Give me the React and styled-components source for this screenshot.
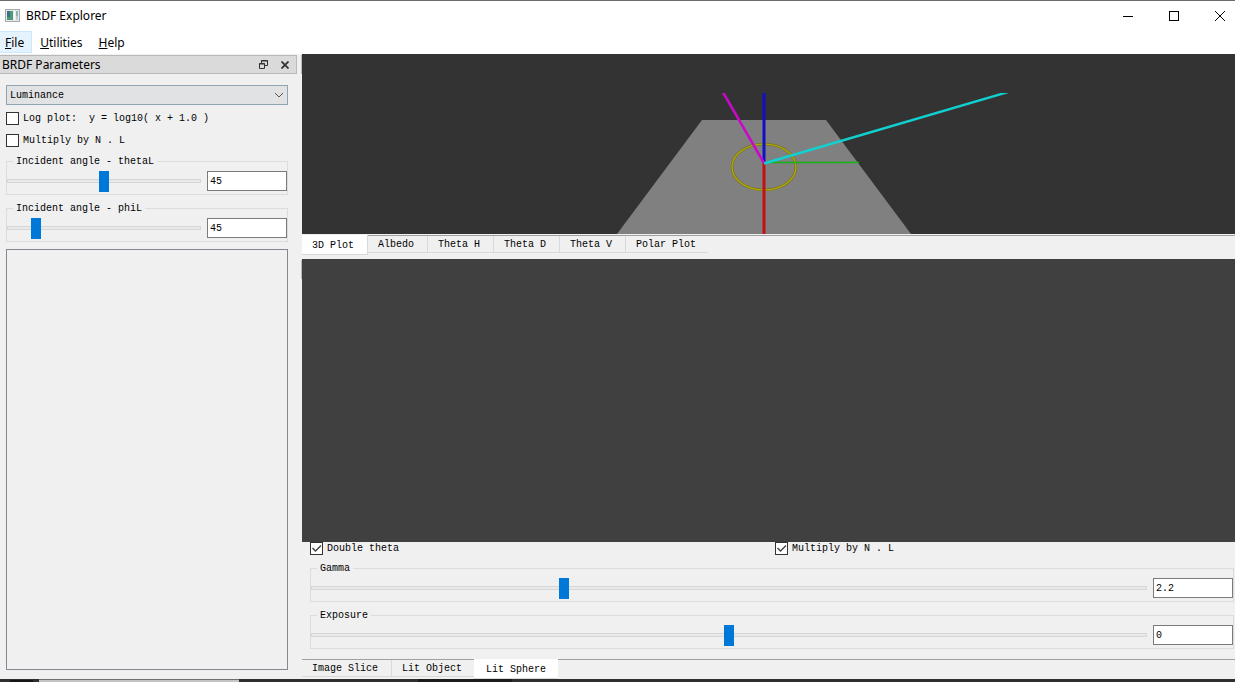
import React from 'react'
import styled, { createGlobalStyle, css } from 'styled-components'

const GlobalStyle = createGlobalStyle`
    * {
        box-sizing: border-box;
    }

    body {
        margin: 0;
        background-color: #f0f0f0;
        color: #000000;
        font-family: "Liberation Mono", monospace;
        font-size: 10px;
        line-height: 12px;
    }

    input, select, button {
        font: inherit;
        color: inherit;
        margin: 0;
    }
`

const Window = styled.div`
    display: flex;
    flex-direction: column;
    height: 100vh;
    overflow: hidden;
    border-top: 1px solid #6b6b6b;
`

const TitleBar = styled.header`
    display: flex;
    align-items: center;
    height: 29px;
    padding-left: 5px;
    background-color: #ffffff;
    font-family: "Noto Sans", sans-serif;
    font-size: 12px;
`

const Title = styled.h1`
    flex: 1;
    margin: 0 0 0 6px;
    font-size: 12px;
    font-weight: 400;
    line-height: 16px;
`

const WindowButtons = styled.div`
    display: flex;
    gap: 16px;
`

const IconButton = styled.button`
    display: flex;
    align-items: center;
    justify-content: center;
    width: ${(props) => props.$width}px;
    height: 18px;
    padding: 0;
    border: none;
    background: none;
`

const MenuBar = styled.nav`
    display: flex;
    height: 24px;
    padding: 1px 0;
    background-color: #ffffff;
    font-family: "Noto Sans", sans-serif;
    font-size: 12px;
`

const MenuItem = styled.button`
    padding: 1px 7px 0;
    border: 1px solid transparent;
    background: none;

    &:first-child {
        padding-left: 5px;
        border-left: none;
    }

    ${(props) => props.$active && css`
        border-color: #cce8ff;
        background-color: #e5f3ff;
    `}
`

const Main = styled.main`
    display: flex;
    flex: 1;
    min-height: 0;
`

const Dock = styled.aside`
    display: flex;
    flex-direction: column;
    width: 297px;
    padding-top: 1px;
`

const DockTitle = styled.div`
    display: flex;
    align-items: center;
    height: 19px;
    padding: 0 1px 0 2px;
    border: 1px solid #b9b9b9;
    border-left: none;
    background-color: #dadada;
    font-family: "Noto Sans", sans-serif;
`

const DockName = styled.h2`
    flex: 1;
    margin: 0;
    font-size: 12px;
    font-weight: 400;
    line-height: 16px;
`

const DockBody = styled.div`
    display: flex;
    flex: 1;
    flex-direction: column;
    gap: 7px;
    padding: 11px 9px 9px 6px;
`

const Combo = styled.div`
    display: grid;
    align-items: center;
    height: 20px;
    border: 1px solid #90a4b2;
    background-color: #e0e2e4;

    > * {
        grid-area: 1 / 1;
    }

    svg {
        justify-self: end;
        margin-right: 3px;
        pointer-events: none;
    }
`

const ComboSelect = styled.select`
    width: 100%;
    height: 18px;
    padding: 1px 3px 0;
    border: none;
    outline: none;
    background: none;
    appearance: none;
`

const DockOptions = styled.div`
    display: grid;
    grid-auto-rows: 14px;
    align-items: start;
    gap: 8px;
`

const CheckLabel = styled.label`
    display: flex;
    align-items: center;
    gap: 4px;
    white-space: pre;
`

const CheckMark = styled.span`
    display: grid;

    > * {
        grid-area: 1 / 1;
    }

    svg {
        display: none;
        pointer-events: none;
    }

    input:checked + svg {
        display: block;
    }
`

const CheckInput = styled.input`
    width: 13px;
    height: 13px;
    border: 1px solid #333333;
    background-color: #ffffff;
    appearance: none;
`

const Group = styled.fieldset`
    display: flex;
    align-items: center;
    gap: 6px;
    min-width: 0;
    margin: 0;
    padding: 3px 0;
    border: 1px solid #dcdcdc;
`

const GroupName = styled.legend`
    height: 12px;
    margin-left: 6px;
    padding: 0 3px;
    line-height: 14px;
`

const Slider = styled.input`
    flex: 1;
    min-width: 0;
    height: 21px;
    background: none;
    appearance: none;

    &::-webkit-slider-runnable-track {
        height: 4px;
        border: 1px solid #d6d6d6;
        background-color: #e7eaea;
    }

    &::-webkit-slider-thumb {
        width: 10px;
        height: 21px;
        margin-top: -9px;
        border: none;
        border-radius: 0;
        background-color: #0078d7;
        appearance: none;
    }
`

const ValueInput = styled.input`
    width: 80px;
    height: 20px;
    padding: 1px 2px 0;
    border: 1px solid #7a7a7a;
    border-radius: 0;
    outline: none;
    background-color: #ffffff;
`

const ParamList = styled.div`
    flex: 1;
    border: 1px solid #828790;
`

const Gutter = styled.div`
    display: flex;
    flex-direction: column;
    align-items: flex-end;
    gap: 186px;
    width: 5px;
    padding-top: 1px;
`

const GutterEdge = styled.span`
    width: 1px;
    height: 19px;
    background-color: #b9b9b9;
`

const Views = styled.section`
    display: flex;
    flex: 1;
    flex-direction: column;
    min-width: 0;
`

const Plot = styled.svg`
    display: block;
    flex: none;
    width: 100%;
    height: 180px;
    margin-bottom: 1px;
    background-color: #333333;
`

const TabBar = styled.div`
    display: flex;
    flex: none;
    align-items: flex-start;
    height: ${(props) => props.$height}px;
    border-top: 1px solid #a0a0a0;
`

const Tab = styled.button`
    height: 17px;
    padding: 2px 13px 0 10px;
    border: solid #d9d9d9;
    border-width: 0 1px 1px 0;
    background-color: #f0f0f0;

    &:last-child {
        padding-right: 12px;
        border-right: none;
    }

    ${(props) => props.$active && css`
        height: 20px;
        margin-top: -1px;
        background-color: #ffffff;

        &:not(:first-child) {
            margin-left: -2px;
            padding-left: 12px;
        }
    `}
`

const SphereView = styled.div`
    flex: 1;
    min-height: 0;
    background-color: #404040;
`

const Controls = styled.div`
    display: flex;
    flex-direction: column;
    gap: 7px;
    padding: 0 1px 10px 8px;
`

const ControlOptions = styled.div`
    display: grid;
    grid-template-columns: 1fr 1fr;
    gap: 6px;
`

const Taskbar = styled.footer`
    display: flex;
    height: 3px;
    background-color: #2f2f2f;
`

const TaskbarStart = styled.div`
    width: 23px;
    margin: 1px 6px 0 10px;
    background-color: #151515;
`

const TaskbarSearch = styled.div`
    width: 200px;
    border-top: 1px solid #6f6f6f;
    background-color: #c4c4c4;
`

const TaskbarWindow = styled.div`
    width: 94px;
    margin-left: 179px;
    background-color: #1b1b1b;
`

const plotTabs = ['3D Plot', 'Albedo', 'Theta H', 'Theta D', 'Theta V', 'Polar Plot']
const sphereTabs = ['Image Slice', 'Lit Object', 'Lit Sphere']

function Check({ label, checked }) {
    return (
        <CheckLabel>
            <CheckMark>
                <CheckInput type="checkbox" defaultChecked={checked} />
                <svg width="13" height="13" viewBox="0 0 13 13">
                    <path d="M2.5 6L5.5 9L11 3.5" fill="none" stroke="#404040" strokeWidth="1.4" />
                </svg>
            </CheckMark>
            {label}
        </CheckLabel>
    )
}

function SliderGroup({ name, max, position, value }) {
    return (
        <Group>
            <GroupName>{name}</GroupName>
            <Slider type="range" min="0" max={max} defaultValue={position} aria-label={name} />
            <ValueInput type="text" defaultValue={value} aria-label={name + ' value'} />
        </Group>
    )
}

function Tabs({ names, active, height }) {
    return (
        <TabBar role="tablist" $height={height}>
            {names.map((name) => (
                <Tab key={name} role="tab" aria-selected={name === active} $active={name === active}>
                    {name}
                </Tab>
            ))}
        </TabBar>
    )
}

function AxesPlot() {
    return (
        <Plot>
            <defs>
                <clipPath id="far">
                    <rect x="0" y="39" width="2000" height="141" />
                </clipPath>
            </defs>
            <polygon points="402,66 524,66 609,180 315,180 400,66" fill="#808080" />
            <g fill="none" clipPath="url(#far)">
                <ellipse cx="462" cy="113" rx="32" ry="23" stroke="#77741f" strokeWidth="2.6" />
                <ellipse cx="462" cy="113" rx="32" ry="23" stroke="#b5ac00" strokeWidth="1.2" />
                <path d="M462 108.5H557" stroke="#12b512" strokeWidth="1.6" />
                <path d="M462 109V180" stroke="#c41010" strokeWidth="3" />
                <path d="M462 39V109" stroke="#1010c4" strokeWidth="3" />
                <path d="M462 109L418.5 34" stroke="#c80ac8" strokeWidth="2.6" />
                <path d="M462 109.5L718 34.5" stroke="#10d0d0" strokeWidth="2.4" />
            </g>
        </Plot>
    )
}

function App() {
    return (
        <>
            <GlobalStyle />

            <Window>
                <TitleBar>
                    <svg width="15" height="13" viewBox="0 0 15 13">
                        <rect x="0.5" y="0.5" width="14" height="12" fill="#e6e9ea" stroke="#a4aaae" />
                        <rect x="2" y="2" width="6" height="9" fill="#4d9a78" />
                        <rect x="2" y="2" width="3" height="6" fill="#3f6f8c" />
                        <rect x="9" y="2" width="1" height="9" fill="#ffffff" />
                        <rect x="11" y="2" width="2" height="5" fill="#8fb3a8" />
                        <rect x="11" y="7" width="2" height="4" fill="#c3c9cc" />
                    </svg>
                    <Title>BRDF Explorer</Title>
                    <WindowButtons>
                        <IconButton $width={30} aria-label="Minimize">
                            <svg width="10" height="10" viewBox="0 0 10 10">
                                <path d="M0 5.5H10" stroke="#000000" />
                            </svg>
                        </IconButton>
                        <IconButton $width={30} aria-label="Maximize">
                            <svg width="10" height="10" viewBox="0 0 10 10">
                                <rect x="0.5" y="0.5" width="9" height="9" fill="none" stroke="#000000" />
                            </svg>
                        </IconButton>
                        <IconButton $width={30} aria-label="Close">
                            <svg width="10" height="10" viewBox="0 0 10 10">
                                <path d="M0 0L10 10M10 0L0 10" stroke="#000000" />
                            </svg>
                        </IconButton>
                    </WindowButtons>
                </TitleBar>

                <MenuBar>
                    <MenuItem $active><u>F</u>ile</MenuItem>
                    <MenuItem><u>U</u>tilities</MenuItem>
                    <MenuItem><u>H</u>elp</MenuItem>
                </MenuBar>

                <Main>
                    <Dock>
                        <DockTitle>
                            <DockName>BRDF Parameters</DockName>
                            <IconButton $width={21} aria-label="Float">
                                <svg width="9" height="9" viewBox="0 0 9 9">
                                    <path d="M2.5 3V0.5H8.5V5.5H6M2 1H9M0.5 3.5H5.5V8.5H0.5ZM0 4H6" fill="none" stroke="#333333" />
                                </svg>
                            </IconButton>
                            <IconButton $width={21} aria-label="Close panel">
                                <svg width="8" height="8" viewBox="0 0 8 8">
                                    <path d="M0.5 0.5L7.5 7.5M7.5 0.5L0.5 7.5" stroke="#333333" strokeWidth="1.8" />
                                </svg>
                            </IconButton>
                        </DockTitle>
                        <DockBody>
                            <Combo>
                                <ComboSelect aria-label="Channel">
                                    <option>Luminance</option>
                                </ComboSelect>
                                <svg width="10" height="6" viewBox="0 0 10 6">
                                    <path d="M1 1L5 5L9 1" fill="none" stroke="#555555" />
                                </svg>
                            </Combo>
                            <DockOptions>
                                <Check label="Log plot:  y = log10( x + 1.0 )" />
                                <Check label="Multiply by N . L" />
                            </DockOptions>
                            <SliderGroup name="Incident angle - thetaL" max={90} position={45} value="45" />
                            <SliderGroup name="Incident angle - phiL" max={360} position={45} value="45" />
                            <ParamList />
                        </DockBody>
                    </Dock>

                    <Gutter>
                        <GutterEdge />
                        <GutterEdge />
                    </Gutter>

                    <Views>
                        <AxesPlot />
                        <Tabs names={plotTabs} active="3D Plot" height={24} />
                        <SphereView />
                        <Controls>
                            <ControlOptions>
                                <Check label="Double theta" checked />
                                <Check label="Multiply by N . L" checked />
                            </ControlOptions>
                            <SliderGroup name="Gamma" max={100} position={30} value="2.2" />
                            <SliderGroup name="Exposure" max={100} position={50} value="0" />
                        </Controls>
                        <Tabs names={sphereTabs} active="Lit Sphere" height={20} />
                    </Views>
                </Main>

                <Taskbar>
                    <TaskbarStart />
                    <TaskbarSearch />
                    <TaskbarWindow />
                </Taskbar>
            </Window>
        </>
    )
}

export default App
